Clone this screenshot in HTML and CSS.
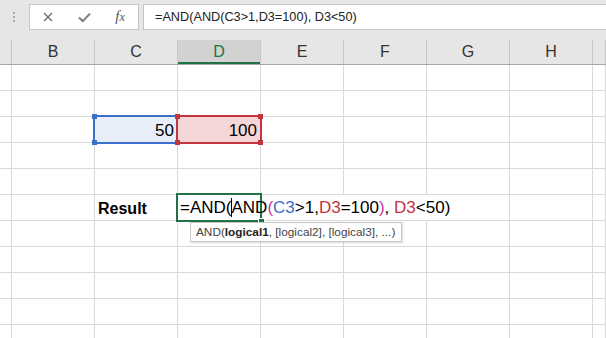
FILE: index.html
```html
<!DOCTYPE html>
<html>
<head>
<meta charset="utf-8">
<link rel="stylesheet" href="styles.css">
</head>
<body>
<div class="fbar">
  <div class="grip"><span></span><span></span><span></span></div>
  <div class="btns">
    <span class="btn"><svg width="10" height="10" viewBox="0 0 10 10"><path d="M1 1L9 9M9 1L1 9" stroke="#6e6e6e" stroke-width="1.4" fill="none"/></svg></span>
    <span class="btn"><svg width="13" height="11" viewBox="0 0 13 11"><path d="M1 5.5L4.8 9.2L12 1.6" stroke="#7a7a7a" stroke-width="2" fill="none"/></svg></span>
    <span class="btn fx"><span class="f">f</span><span class="x">x</span></span>
  </div>
  <div class="input">=AND(AND(C3&gt;1,D3=100), D3&lt;50)</div>
</div>
<div class="sheet">
  <div class="row hdr">
    <div class="h"></div><div class="h">B</div><div class="h">C</div><div class="h act">D</div><div class="h">E</div><div class="h">F</div><div class="h">G</div><div class="h">H</div><div class="h"></div>
  </div>
  <div class="row"><div class="c"></div><div class="c"></div><div class="c"></div><div class="c"></div><div class="c"></div><div class="c"></div><div class="c"></div><div class="c"></div><div class="c"></div></div>
  <div class="row"><div class="c"></div><div class="c"></div><div class="c"></div><div class="c"></div><div class="c"></div><div class="c"></div><div class="c"></div><div class="c"></div><div class="c"></div></div>
  <div class="row">
    <div class="c"></div><div class="c"></div>
    <div class="c num ref-blue">50<span class="box blue"></span><span class="sq b tl"></span><span class="sq b bl"></span></div>
    <div class="c num ref-red">100<span class="box red"></span><span class="sq r tl"></span><span class="sq r bl"></span><span class="sq r tr"></span><span class="sq r br"></span></div>
    <div class="c"></div><div class="c"></div><div class="c"></div><div class="c"></div><div class="c"></div>
  </div>
  <div class="row"><div class="c"></div><div class="c"></div><div class="c"></div><div class="c"></div><div class="c"></div><div class="c"></div><div class="c"></div><div class="c"></div><div class="c"></div></div>
  <div class="row"><div class="c"></div><div class="c"></div><div class="c"></div><div class="c"></div><div class="c"></div><div class="c"></div><div class="c"></div><div class="c"></div><div class="c"></div></div>
  <div class="row">
    <div class="c"></div><div class="c"></div>
    <div class="c label">Result</div>
    <div class="c edit"><span class="etext">=AND(<span class="caret"></span>AND<span class="p">(</span><span class="rb">C3</span>&gt;1,<span class="rr">D3</span>=100<span class="p">)</span>, <span class="rr">D3</span>&lt;50)</span><span class="box green"></span><span class="handle"></span>
      <div class="tip">AND(<b>logical1</b>, [logical2], [logical3], ...)</div>
    </div>
    <div class="c over"></div><div class="c over"></div><div class="c"></div><div class="c"></div><div class="c"></div>
  </div>
  <div class="row"><div class="c"></div><div class="c"></div><div class="c"></div><div class="c"></div><div class="c"></div><div class="c"></div><div class="c"></div><div class="c"></div><div class="c"></div></div>
  <div class="row"><div class="c"></div><div class="c"></div><div class="c"></div><div class="c"></div><div class="c"></div><div class="c"></div><div class="c"></div><div class="c"></div><div class="c"></div></div>
  <div class="row"><div class="c"></div><div class="c"></div><div class="c"></div><div class="c"></div><div class="c"></div><div class="c"></div><div class="c"></div><div class="c"></div><div class="c"></div></div>
  <div class="row"><div class="c"></div><div class="c"></div><div class="c"></div><div class="c"></div><div class="c"></div><div class="c"></div><div class="c"></div><div class="c"></div><div class="c"></div></div>
  <div class="row"><div class="c"></div><div class="c"></div><div class="c"></div><div class="c"></div><div class="c"></div><div class="c"></div><div class="c"></div><div class="c"></div><div class="c"></div></div>
</div>
</body>
</html>
```
FILE: styles.css
```css
* { box-sizing: border-box; }
html, body { margin: 0; padding: 0; }
body {
  width: 606px;
  height: 338px;
  overflow: hidden;
  background: #fff;
  font-family: "Liberation Sans", Arial, sans-serif;
}
.fbar {
  display: flex;
  align-items: flex-start;
  height: 40px;
  padding-top: 4px;
  background: #e6e6e6;
}
.grip {
  width: 29px;
  height: 26px;
  display: flex;
  flex-direction: column;
  gap: 2px;
  padding: 8px 0 0 13px;
}
.grip span {
  width: 2px;
  height: 2px;
  background: #a9a9a9;
}
.btns {
  width: 110px;
  height: 26px;
  background: #fff;
  border: 1px solid #c6c6c6;
  display: flex;
}
.btn {
  width: 36px;
  display: flex;
  align-items: center;
  justify-content: center;
}
.fx {
  font-family: "Liberation Serif", "Times New Roman", serif;
  font-style: italic;
  color: #555;
  padding-bottom: 2px;
}
.fx .f { font-size: 15px; }
.fx .x { font-size: 12px; margin-top: 3px; }
.input {
  flex: 1;
  height: 26px;
  margin-left: 4px;
  background: #fff;
  border: 1px solid #c6c6c6;
  border-right: none;
  padding-left: 11px;
  font-size: 12.7px;
  line-height: 24px;
  color: #222;
  white-space: nowrap;
}
.row {
  display: grid;
  grid-template-columns: 12px repeat(7, 83px) 1fr;
}
.hdr {
  height: 25px;
  background: #e6e6e6;
  border-bottom: 1px solid #a8a8a8;
}
.h {
  border-right: 1px solid #c6c6c6;
  display: flex;
  align-items: center;
  justify-content: center;
  font-size: 16px;
  color: #333;
}
.h.act {
  background: #d2d2d2;
  color: #217346;
  box-shadow: inset 0 -2px 0 #217346;
}
.c {
  position: relative;
  height: 26px;
  border-right: 1px solid #d9d9d9;
  border-bottom: 1px solid #d9d9d9;
  display: flex;
  align-items: flex-end;
  padding: 0 3px 3px 3px;
  font-size: 17px;
  line-height: 17px;
  color: #000;
  white-space: nowrap;
}
.num { justify-content: flex-end; }
.ref-blue { background: #e8eef9; }
.ref-red { background: #f5d6d6; }
.box {
  position: absolute;
  top: -2px;
  left: -2px;
  right: -2px;
  bottom: -2px;
  border: 2px solid;
}
.box.blue { border-color: #3a70c8; right: -1px; }
.box.red { border-color: #c3343e; z-index: 2; }
.sq {
  position: absolute;
  width: 5px;
  height: 5px;
  z-index: 3;
}
.sq.b { background: #3a70c8; }
.sq.r { background: #c3343e; }
.sq.tl { left: -3px; top: -3px; }
.sq.bl { left: -3px; top: 23px; }
.sq.tr { left: 80px; top: -3px; }
.sq.br { left: 80px; top: 23px; }
.label {
  font-weight: bold;
  font-size: 16px;
  line-height: 16px;
}
.edit {
  padding-left: 2px;
  z-index: 4;
}
.etext { position: relative; z-index: 5; }
.caret {
  display: inline-block;
  width: 1px;
  height: 19px;
  background: #000;
  vertical-align: -4px;
  margin-right: -1px;
}
.p { color: #c8359e; }
.rb { color: #3a70c8; }
.rr { color: #c3343e; }
.box.green { border-color: #217346; }
.handle {
  position: absolute;
  left: 80px;
  top: 23px;
  width: 7px;
  height: 7px;
  background: #217346;
  border: 1px solid #fff;
  z-index: 3;
}
.over { border-right-color: transparent; }
.tip {
  position: absolute;
  left: 12px;
  top: 27px;
  height: 20px;
  padding: 0 6px 0 5px;
  background: #fff;
  border: 1px solid #c6c6c6;
  box-shadow: 1px 1px 2px rgba(0, 0, 0, 0.15);
  font-size: 11.8px;
  line-height: 18px;
  color: #444;
  z-index: 6;
}
.tip b { color: #222; }
```
